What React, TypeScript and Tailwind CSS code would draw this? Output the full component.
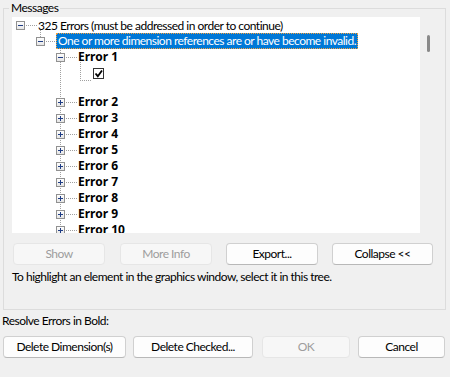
import React from 'react'

const LINE = '#a0a0a0'

// row centres inside the tree box (px from its top)
const errorRows = [2, 3, 4, 5, 6, 7, 8, 9, 10, 11]
const errorCenter = (n: number) => 85 + 16 * (n - 2)

function HLine({ x1, x2, y }: { x1: number; x2: number; y: number }) {
  return <line x1={x1} y1={y + 0.5} x2={x2 + 1} y2={y + 0.5} stroke={LINE} strokeDasharray="1 1" />
}

function VLine({ x, y1, y2 }: { x: number; y1: number; y2: number }) {
  return <line x1={x + 0.5} y1={y1} x2={x + 0.5} y2={y2 + 1} stroke={LINE} strokeDasharray="1 1" />
}

function Expander({ x, cy, open }: { x: number; cy: number; open?: boolean }) {
  return (
    <g>
      <rect x={x + 0.5} y={cy - 3.5} width={8} height={8} fill="url(#btn)" stroke="#919191" />
      <line x1={x + 2} y1={cy + 0.5} x2={x + 7} y2={cy + 0.5} stroke="#1f3d85" />
      {!open && <line x1={x + 4.5} y1={cy - 2} x2={x + 4.5} y2={cy + 3} stroke="#1f3d85" />}
    </g>
  )
}

function TreeLines() {
  return (
    <svg className="absolute left-0 top-0 pointer-events-none" width={408} height={216} shapeRendering="crispEdges">
      <defs>
        <linearGradient id="btn" x1="0" y1="0" x2="0" y2="1">
          <stop offset="0" stopColor="#ffffff" />
          <stop offset="1" stopColor="#e4e4e4" />
        </linearGradient>
      </defs>
      {/* root */}
      <HLine x1={14} x2={24} y={8} />
      <VLine x={28} y1={13} y2={19} />
      {/* dimension node */}
      <HLine x1={34} x2={43} y={24} />
      <VLine x={48} y1={29} y2={216} />
      {/* error 1 children */}
      <VLine x={68} y1={45} y2={63} />
      <HLine x1={68} x2={78} y={63} />
      <HLine x1={54} x2={64} y={40} />
      {errorRows.map((n) => (
        <HLine key={n} x1={54} x2={64} y={errorCenter(n)} />
      ))}
      <Expander x={4} cy={8} open />
      <Expander x={24} cy={24} open />
      <Expander x={44} cy={40} open />
      {errorRows.map((n) => (
        <Expander key={n} x={44} cy={errorCenter(n)} />
      ))}
      {/* state checkbox */}
      <rect x={81.5} y={51.5} width={10} height={10} fill="#fff" stroke="#333" />
      <path d="M83.5 56.5 L85.8 59.2 L90 53.5" fill="none" stroke="#000" strokeWidth={1.8} shapeRendering="auto" />
    </svg>
  )
}

function Button({ label, w, disabled }: { label: string; w: string; disabled?: boolean }) {
  return (
    <button
      className={
        disabled
          ? `${w} h-[22px] rounded-[4px] border border-[#e6e6e6] bg-[#f7f7f7] text-[#9d9d9d]`
          : `${w} h-[22px] rounded-[4px] border border-[#d0d0d0] border-b-[#b8b8b8] bg-[#fdfdfd] text-black`
      }
    >
      {label}
    </button>
  )
}

export default function App() {
  return (
    <div
      className="w-[450px] h-[377px] overflow-hidden bg-[#f0f0f0] text-[12px] leading-[16px] tracking-[-0.5px] text-black"
      style={{ fontFamily: 'Lato, "Noto Sans", sans-serif' }}
    >
      <div className="pl-[3px]">
        <fieldset className="w-[443px] border border-[#dcdcdc] pb-[24px]">
          <legend className="ml-[5px] px-[2px] leading-[16px]">Messages</legend>

          {/* tree view */}
          <div className="mt-[1px] ml-[8px] flex w-[425px] h-[216px]">
            <div className="relative w-[408px] h-[216px] overflow-hidden bg-white">
              <TreeLines />
              <div className="relative">
                <div className="h-[16px] pl-[26px] pt-[1px] whitespace-nowrap">
                  325 Errors (must be addressed in order to continue)
                </div>
                <div className="h-[16px] pl-[44px] whitespace-nowrap">
                  <span className="inline-block h-[16px] px-[1px] bg-[#0078d7] text-white border border-dotted border-[#f7a13a] leading-[14px]">
                    One or more dimension references are or have become invalid.
                  </span>
                </div>
                <div className="h-[16px] pl-[66px] font-bold tracking-normal font-['Noto_Sans']">Error 1</div>
                <div className="h-[29px]" />
                {errorRows.map((n) => (
                  <div key={n} className="h-[16px] pl-[66px] font-bold tracking-normal font-['Noto_Sans']">
                    Error {n}
                  </div>
                ))}
              </div>
            </div>
            {/* thin scrollbar */}
            <div className="w-[17px] h-[216px] pl-[7px] pt-[18px]">
              <div className="w-[3px] h-[17px] rounded-full bg-[#8a8a8a]" />
            </div>
          </div>

          <div className="mt-[10px] ml-[9px] flex">
            <Button label="Show" w="w-[92px]" disabled />
            <div className="ml-[15px]">
              <Button label="More Info" w="w-[92px]" disabled />
            </div>
            <div className="ml-[14px]">
              <Button label="Export..." w="w-[92px]" />
            </div>
            <div className="ml-[14px]">
              <Button label="Collapse <<" w="w-[101px]" />
            </div>
          </div>

          <p className="mt-[4px] ml-[8px]">To highlight an element in the graphics window, select it in this tree.</p>
        </fieldset>
      </div>

      <p className="mt-[3px] pl-[2px]">Resolve Errors in Bold:</p>

      <div className="mt-[7px] flex pl-[3px]">
        <Button label="Delete Dimension(s)" w="w-[123px]" />
        <div className="ml-[7px]">
          <Button label="Delete Checked..." w="w-[120px]" />
        </div>
        <div className="ml-[9px]">
          <Button label="OK" w="w-[88px]" disabled />
        </div>
        <div className="ml-[8px]">
          <Button label="Cancel" w="w-[87px]" />
        </div>
      </div>
    </div>
  )
}
